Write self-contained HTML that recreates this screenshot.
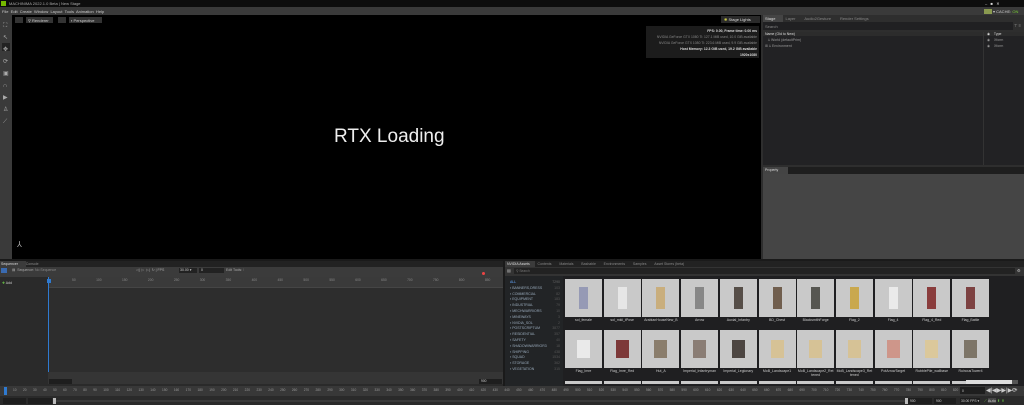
<!DOCTYPE html>
<html><head><meta charset="utf-8"><style>
*{margin:0;padding:0;box-sizing:border-box}
body{width:1024px;height:405px;background:#2a2a2a;font-family:"Liberation Sans",sans-serif;overflow:hidden;position:relative;color:#bbb}
.a{position:absolute}
.t{font-size:4px;white-space:nowrap}
.cell{position:absolute;width:37px;height:38px;background:#c9c9c9}
.lbl{position:absolute;width:37px;font-size:3.5px;color:#ccc;text-align:center}
.cat{font-size:3.5px;color:#9ab;line-height:5.8px}
</style></head><body>
<!-- title bar -->
<div class="a" style="left:0;top:0;width:1024px;height:7px;background:#0d0d0d"></div>
<div class="a" style="left:1px;top:1px;width:5px;height:5px;background:#76b900"></div>
<div class="a t" style="left:9px;top:1px;color:#aaa">MACHINIMA  2022.1.0 Beta | New Stage</div>
<div class="a t" style="left:985px;top:1px;color:#ddd">–&nbsp;&nbsp;&nbsp;■&nbsp;&nbsp;&nbsp;✕</div>
<!-- menu -->
<div class="a" style="left:0;top:7px;width:1024px;height:8px;background:#3a3a3a"></div>
<div class="a t" style="left:2px;top:9px;color:#ccc">File&nbsp; Edit&nbsp; Create&nbsp; Window&nbsp; Layout&nbsp; Tools&nbsp; Animation&nbsp; Help</div>
<div class="a" style="left:984px;top:9px;width:8px;height:5px;background:#8a9a50"></div>
<div class="a t" style="left:993px;top:9px;color:#ccc">▾ CACHE: <span style="color:#7c3">ON</span></div>
<!-- left toolbar -->
<div class="a" style="left:0;top:15px;width:12px;height:244px;background:#3a3a3a"></div>
<div class="a" style="left:2px;top:43px;width:8px;height:8px;background:#222"></div>
<div class="a t" style="left:3px;top:20px;color:#aaa;font-size:6px;line-height:12px">⛶<br>↖<br>✥<br>⟳<br>▣<br>∩<br>▶<br>♙<br>⟋</div>
<!-- viewport -->
<div class="a" style="left:12px;top:15px;width:749px;height:244px;background:#000"></div>
<div class="a" style="left:15px;top:17px;width:8px;height:6px;background:#333"></div>
<div class="a" style="left:26px;top:17px;width:27px;height:6px;background:#333"></div>
<div class="a t" style="left:28px;top:18px;color:#ccc">⚲ Renderer</div>
<div class="a" style="left:58px;top:17px;width:8px;height:6px;background:#333"></div>
<div class="a" style="left:69px;top:17px;width:33px;height:6px;background:#333"></div>
<div class="a t" style="left:71px;top:18px;color:#ccc">▪ Perspective</div>
<div class="a" style="left:721px;top:16px;width:39px;height:7px;background:#2a2a2a"></div>
<div class="a t" style="left:724px;top:17px;color:#ddd"><span style="color:#cc4">✺</span> Stage Lights</div>
<div class="a" style="left:646px;top:26px;width:113px;height:32px;background:#1c1c1c"></div>
<div class="a t" style="left:648px;top:28px;width:109px;text-align:right;font-size:3.4px;line-height:6px;color:#888"><b style="color:#ddd">FPS: 0.00, Frame time: 0.00 ms</b><br>NVIDIA GeForce GTX 1080 Ti: 127.1 MiB used, 10.0 GiB available<br>NVIDIA GeForce GTX 1080 Ti: 223.6 MiB used, 9.9 GiB available<br><b style="color:#ddd">Host Memory: 12.3 GiB used, 19.2 GiB available</b><br><b style="color:#ddd">1920x1080</b></div>
<div class="a" style="left:334px;top:126px;font-size:19px;color:#eee">RTX Loading</div>
<div class="a t" style="left:17px;top:240px;color:#aaa;font-size:8px">⅄</div>
<!-- right panel -->
<div class="a" style="left:761px;top:15px;width:263px;height:244px;background:#2e2e2e"></div>
<div class="a" style="left:763px;top:15px;width:20px;height:7px;background:#444"></div>
<div class="a t" style="left:765px;top:16px;color:#ddd">Stage&nbsp;&nbsp;&nbsp;&nbsp;&nbsp;&nbsp;&nbsp;&nbsp;&nbsp;<span style="color:#888">Layer&nbsp;&nbsp;&nbsp;&nbsp;&nbsp;&nbsp;&nbsp;&nbsp;Audio2Gesture&nbsp;&nbsp;&nbsp;&nbsp;&nbsp;&nbsp;&nbsp;&nbsp;Render Settings</span></div>
<div class="a" style="left:763px;top:22px;width:250px;height:8px;background:#202022"></div>
<div class="a t" style="left:765px;top:24px;color:#888">Search</div>
<div class="a t" style="left:1014px;top:23px;color:#aaa">⊤ ≡</div>
<div class="a" style="left:763px;top:32px;width:261px;height:133px;background:#222224"></div>
<div class="a" style="left:763px;top:32px;width:261px;height:4px;background:#2c2c2c"></div>
<div class="a t" style="left:765px;top:32px;font-size:3.5px;color:#ddd">Name (Old to New)</div>
<div class="a t" style="left:987px;top:32px;font-size:3.5px;color:#ddd">◉&nbsp;&nbsp;&nbsp; Type</div>
<div class="a t" style="left:765px;top:37px;font-size:3.5px;color:#999;line-height:6px">&nbsp;&nbsp;&nbsp;⅄ World (defaultPrim)<br>⊞ ⅄ Environment</div>
<div class="a t" style="left:987px;top:37px;font-size:3.5px;color:#999;line-height:6px">◉&nbsp;&nbsp;&nbsp; Xform<br>◉&nbsp;&nbsp;&nbsp; Xform</div>
<div class="a" style="left:983px;top:32px;width:1px;height:133px;background:#333"></div>
<div class="a" style="left:763px;top:167px;width:261px;height:7px;background:#1e1e1e"></div>
<div class="a" style="left:763px;top:167px;width:25px;height:7px;background:#444"></div>
<div class="a t" style="left:765px;top:168px;color:#ddd;font-size:3.5px">Property</div>
<div class="a" style="left:763px;top:174px;width:261px;height:85px;background:#454545"></div>
<!-- bottom area -->
<div class="a" style="left:0;top:259px;width:1024px;height:2px;background:#1a1a1a"></div>
<div class="a" style="left:0;top:261px;width:503px;height:6px;background:#222"></div>
<div class="a" style="left:0;top:261px;width:26px;height:6px;background:#3b3b3b"></div>
<div class="a t" style="left:1px;top:262px;color:#ddd;font-size:3.5px">Sequencer&nbsp;&nbsp;&nbsp;&nbsp;&nbsp;&nbsp;&nbsp;&nbsp;<span style="color:#888">Console</span></div>
<div class="a" style="left:0;top:267px;width:503px;height:10px;background:#3b3b3b"></div>
<div class="a" style="left:1px;top:268px;width:6px;height:5px;background:#3a6ab0"></div>
<div class="a t" style="left:12px;top:268px;color:#aaa;font-size:3.5px">▤&nbsp; Sequence: <span style="color:#888">No Sequence</span></div>
<div class="a t" style="left:136px;top:268px;color:#aaa;font-size:3.5px">◁|&nbsp; ▷&nbsp; ▷|&nbsp; ↻ | FPS</div>
<div class="a" style="left:179px;top:268px;width:18px;height:5px;background:#222"></div>
<div class="a t" style="left:180px;top:268px;color:#ccc;font-size:3.5px">30.00 ▾</div>
<div class="a" style="left:199px;top:268px;width:25px;height:5px;background:#222"></div>
<div class="a t" style="left:201px;top:268px;color:#ccc;font-size:3.5px">0</div>
<div class="a t" style="left:226px;top:268px;color:#aaa;font-size:3.5px">Edit Tools: ⫶</div>
<div class="a" style="left:482px;top:272px;width:3px;height:3px;background:#e44;border-radius:50%"></div>
<div class="a" style="left:0;top:277px;width:48px;height:95px;background:#2a2a2a"></div>
<div class="a t" style="left:2px;top:281px;color:#ccc;font-size:3.5px"><span style="color:#6b4">✚</span> Add</div>
<div class="a" style="left:48px;top:277px;width:455px;height:10px;background:#3a3a3a"></div>
<div class="a t" style="left:72px;top:278px;color:#888;font-size:3.3px;word-spacing:19.5px">50 100 150 200 250 300 350 400 450 500 550 600 650 700 750 800 850</div>
<div class="a" style="left:48px;top:287px;width:455px;height:1px;background:#454545"></div>
<div class="a" style="left:48px;top:288px;width:455px;height:84px;background:#2d2d2d"></div>
<div class="a" style="left:48px;top:277px;width:1px;height:107px;background:#2f7ad0"></div>
<div class="a" style="left:47px;top:279px;width:4px;height:4px;background:#2f7ad0"></div>
<div class="a" style="left:48px;top:372px;width:455px;height:12px;background:#353535"></div>
<div class="a" style="left:49px;top:379px;width:23px;height:5px;background:#1e1e1e"></div>
<div class="a" style="left:479px;top:379px;width:23px;height:5px;background:#1e1e1e"></div>
<div class="a t" style="left:481px;top:379px;color:#ccc;font-size:3.3px">900</div>
<div class="a" style="left:503px;top:261px;width:2px;height:125px;background:#1a1a1a"></div>
<!-- asset browser -->
<div class="a" style="left:505px;top:261px;width:519px;height:6px;background:#222"></div>
<div class="a" style="left:505px;top:261px;width:30px;height:6px;background:#3b3b3b"></div>
<div class="a t" style="left:507px;top:262px;color:#ddd;font-size:3.5px">NVIDIA Assets&nbsp;&nbsp;&nbsp;&nbsp;&nbsp;&nbsp;&nbsp;&nbsp;<span style="color:#888">Contents&nbsp;&nbsp;&nbsp;&nbsp;&nbsp;&nbsp;&nbsp;&nbsp;Materials&nbsp;&nbsp;&nbsp;&nbsp;&nbsp;&nbsp;&nbsp;&nbsp;Bashable&nbsp;&nbsp;&nbsp;&nbsp;&nbsp;&nbsp;&nbsp;&nbsp;Environments&nbsp;&nbsp;&nbsp;&nbsp;&nbsp;&nbsp;&nbsp;&nbsp;Samples&nbsp;&nbsp;&nbsp;&nbsp;&nbsp;&nbsp;&nbsp;&nbsp;Asset Stores (beta)</span></div>
<div class="a" style="left:505px;top:267px;width:519px;height:9px;background:#333"></div>
<div class="a" style="left:514px;top:268px;width:501px;height:6px;background:#222"></div>
<div class="a t" style="left:516px;top:269px;color:#777;font-size:3.3px">⚲ Search</div>
<div class="a t" style="left:507px;top:268px;color:#ccc">▤</div>
<div class="a t" style="left:1017px;top:268px;color:#ccc">⚙</div>
<div class="a" style="left:505px;top:276px;width:58px;height:110px;background:#222426"></div>
<div class="a cat" style="left:510px;top:280px;width:50px">
<div style="color:#6af">ALL<span style="float:right;color:#666">7290</span></div>
<div>▪ BANNERS,DRESS<span style="float:right;color:#555">103</span></div>
<div>▪ COMMERCIAL<span style="float:right;color:#555">82</span></div>
<div>▪ EQUIPMENT<span style="float:right;color:#555">183</span></div>
<div>▪ INDUSTRIAL<span style="float:right;color:#555">79</span></div>
<div>▪ MECHWARRIORS<span style="float:right;color:#555">10</span></div>
<div>▪ MINEWAYS<span style="float:right;color:#555">3</span></div>
<div>▪ NVIDIA_SOL<span style="float:right;color:#555">2</span></div>
<div>▪ POSTSCRIPTUM<span style="float:right;color:#555">3877</span></div>
<div>▪ RESIDENTIAL<span style="float:right;color:#555">357</span></div>
<div>▪ SAFETY<span style="float:right;color:#555">40</span></div>
<div>▪ SHADOWWARRIOR3<span style="float:right;color:#555">18</span></div>
<div>▪ SHIPPING<span style="float:right;color:#555">438</span></div>
<div>▪ SQUAD<span style="float:right;color:#555">1534</span></div>
<div>▪ STORAGE<span style="float:right;color:#555">362</span></div>
<div>▪ VEGETATION<span style="float:right;color:#555">315</span></div>
</div>
<div class="a" style="left:563px;top:276px;width:461px;height:110px;background:#1f1f21"></div>
<div id="g"></div>
<script>
var n1=["sol_female","sol_mkii_tPose","ArabianHouseNew_B","Arrow","Auxial_Infantry","BD_Chest","BlacksmithForge","Flag_2","Flag_4","Flag_4_Red","Flag_Battle"];
var n2=["Flag_Imre","Flag_Imre_Red","Hut_A","Imperial_Infantryman","Imperial_Legionary","MoB_Landscape1","MoB_Landscape2_Ret tened","MoB_Landscape3_Ret tened","PotArrowTarget","RubblePile_wallbase","RuinousTower4"];
var c1=["#8a8fb0","#eee","#c9a86a","#777","#3a2f28","#5a4430","#3a3a33","#c9a030","#f2f2f2","#7a1a1a","#6a2020"];
var c2=["#f2f2f2","#6a1515","#7a6a55","#7a6a60","#2e2620","#d9c08a","#d9c08a","#d9c08a","#d08a7a","#e0c890","#6a6050"];
var h="";
for(var i=0;i<11;i++){var x=565+i*38.7;
h+='<div class="cell" style="left:'+x+'px;top:279px"><div class="a" style="left:14px;top:8px;width:9px;height:22px;background:'+c1[i]+';opacity:.8"></div></div>';
h+='<div class="lbl" style="left:'+x+'px;top:318px">'+n1[i]+'</div>';
h+='<div class="cell" style="left:'+x+'px;top:330px"><div class="a" style="left:12px;top:10px;width:13px;height:18px;background:'+c2[i]+';opacity:.8"></div></div>';
h+='<div class="lbl" style="left:'+x+'px;top:369px;line-height:4px">'+n2[i]+'</div>';
h+='<div class="cell" style="left:'+x+'px;top:381px;height:3px"></div>';}
document.getElementById("g").innerHTML=h;
</script>
<div class="a" style="left:966px;top:380px;width:46px;height:4px;background:#ddd"></div>
<div class="a" style="left:1012px;top:380px;width:6px;height:4px;background:#555"></div>
<!-- bottom timeline -->
<div class="a" style="left:0;top:386px;width:1024px;height:10px;background:#383838"></div>
<div class="a t" style="left:13px;top:388px;color:#999;font-size:3.2px;word-spacing:5.6px">10 20 30 40 50 60 70 80 90 100 110 120 130 140 150 160 170 180 190 200 210 220 230 240 250 260 270 280 290 300 310 320 330 340 350 360 370 380 390 400 410 420 430 440 450 460 470 480 490 500 510 520 530 540 550 560 570 580 590 600 610 620 630 640 650 660 670 680 690 700 710 720 730 740 750 760 770 780 790 800 810 820 830 840 850 860 870 880 890</div>
<div class="a" style="left:4px;top:387px;width:3px;height:8px;background:#2f7ad0"></div>
<div class="a" style="left:0;top:396px;width:1024px;height:9px;background:#2a2a2a"></div>
<div class="a" style="left:3px;top:398px;width:23px;height:6px;background:#1e1e1e"></div>
<div class="a" style="left:28px;top:398px;width:24px;height:6px;background:#1e1e1e"></div>
<div class="a" style="left:53px;top:398px;width:3px;height:6px;background:#bbb"></div>
<div class="a" style="left:56px;top:400px;width:849px;height:2px;background:#3a3a3a"></div>
<div class="a" style="left:905px;top:398px;width:3px;height:6px;background:#bbb"></div>
<div class="a" style="left:908px;top:398px;width:24px;height:6px;background:#1e1e1e"></div>
<div class="a t" style="left:910px;top:399px;font-size:3.3px;color:#ccc">900</div>
<div class="a" style="left:934px;top:398px;width:22px;height:6px;background:#1e1e1e"></div>
<div class="a t" style="left:936px;top:399px;font-size:3.3px;color:#ccc">900</div>
<div class="a" style="left:960px;top:387px;width:25px;height:7px;background:#1e1e1e"></div>
<div class="a t" style="left:962px;top:389px;font-size:3.3px;color:#ccc">0</div>
<div class="a t" style="left:986px;top:387px;font-size:6px;color:#ccc">◀|◀▶▶|▶⟳</div>
<div class="a" style="left:960px;top:398px;width:20px;height:6px;background:#1e1e1e"></div>
<div class="a t" style="left:961px;top:399px;font-size:3.3px;color:#ccc">30.00 FPS ▾</div>
<div class="a t" style="left:984px;top:398px;font-size:4px;color:#6b4">⟋ <span style="color:#ccc;background:#444">Auto</span> ▮ ▮</div>
</body></html>
